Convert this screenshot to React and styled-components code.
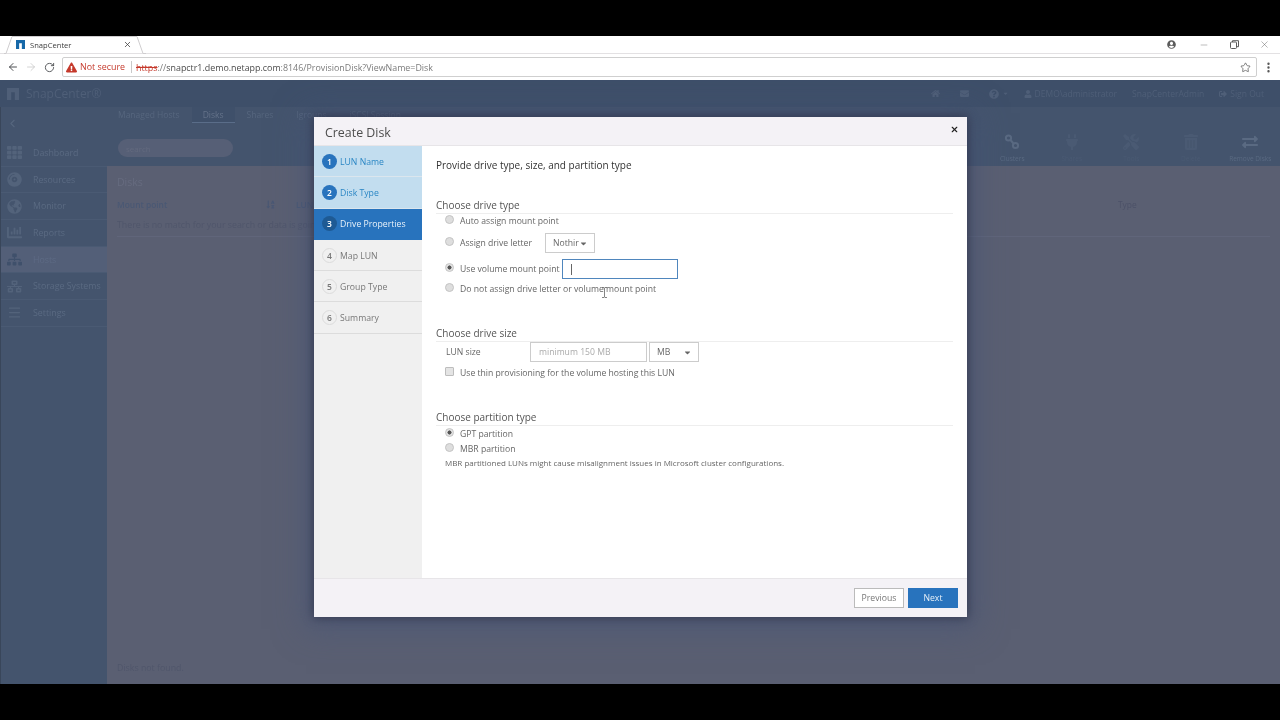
import React from 'react'
import styled, { createGlobalStyle } from 'styled-components'
import { ArrowLeft, ArrowRight, RotateCw, Star, X, Minus, ChevronLeft, EllipsisVertical, Menu } from 'lucide-react'
import {
  FaTh, FaCompactDisc, FaGlobeAmericas, FaChartBar, FaSitemap, FaNetworkWired,
  FaHome, FaEnvelope, FaQuestionCircle, FaUser, FaSignOutAlt, FaCaretDown, FaUserCircle,
  FaExchangeAlt, FaTrashAlt, FaTools, FaExclamationTriangle, FaSortAlphaDown, FaPlug,
} from 'react-icons/fa'

const GlobalStyle = createGlobalStyle`
  html, body { margin: 0; padding: 0; background: #000; }
  body { font-family: "Open Sans", "Liberation Sans", sans-serif; }
`

const Screen = styled.div`
  width: 1280px;
  height: 720px;
  display: flex;
  flex-direction: column;
  background: #000;
  overflow: hidden;
  filter: blur(0.3px);
`
const Letterbox = styled.div`
  height: ${p => p.$h}px;
  flex: none;
  background: #000;
`

/* browser chrome */
const TabStrip = styled.div`
  height: 18px;
  flex: none;
  display: flex;
  align-items: center;
  justify-content: space-between;
  background: #fff;
  border-bottom: 1px solid #e3e1e3;
  box-sizing: border-box;
  padding-right: 1px;
`
const Tab = styled.div`
  position: relative;
  width: 124px;
  height: 18px;
  margin-left: 12px;
  display: flex;
  align-items: center;
  gap: 5px;
  padding-left: 4px;
  box-sizing: border-box;
  font-size: 7.6px;
  color: #3b3b3b;
`
const TabOutline = styled.svg`
  position: absolute;
  left: -8px;
  top: 0;
`
const TabClose = styled(X)`
  margin-left: auto;
  margin-right: 4px;
`
const Favicon = styled.svg`
  flex: none;
`
const WindowButtons = styled.div`
  display: flex;
  align-items: center;
  color: #5c5c5c;
`
const WindowButton = styled.div`
  width: 30px;
  margin-right: ${p => p.$gap || 0}px;
  display: flex;
  justify-content: center;
  align-items: center;
`
const Toolbar = styled.div`
  height: 26px;
  flex: none;
  display: flex;
  align-items: center;
  background: #fff;
  color: #5f6368;
  padding-left: 4px;
  box-sizing: border-box;
`
const NavButton = styled.div`
  width: 18px;
  display: flex;
  justify-content: center;
  color: ${p => p.$off ? '#c6c6c6' : '#4f5154'};
`
const Omnibox = styled.div`
  width: 1195px;
  height: 20px;
  margin-left: 4px;
  border: 1px solid #cfcfcf;
  border-radius: 2px;
  box-sizing: border-box;
  display: flex;
  align-items: center;
  padding: 0 5px 0 3px;
  font-size: 8.9px;
  color: #4a4a4a;
  white-space: nowrap;
`
const NotSecure = styled.span`
  display: flex;
  align-items: center;
  gap: 3px;
  color: #c5392b;
  padding: 0 6px 0 0;
  margin-right: 4px;
  border-right: 1px solid #c9c9c9;
  line-height: 12px;
`
const Https = styled.span`
  color: #c5392b;
  text-decoration: line-through;
`
const Dim = styled.span`
  color: #7b7b7b;
`
const StarWrap = styled.div`
  margin-left: auto;
  display: flex;
  color: #555;
`
const MenuDots = styled.div`
  margin-left: 5px;
  display: flex;
  color: #555;
`

/* dimmed application */
const Page = styled.div`
  position: relative;
  flex: 1;
  display: flex;
  flex-direction: column;
  background: #5a5f72;
  overflow: hidden;
`
const AppHeader = styled.div`
  height: 27px;
  flex: none;
  display: flex;
  align-items: center;
  background: #3e4f69;
  padding: 0 16px 0 7px;
  box-sizing: border-box;
  color: #4f5f78;
  font-size: 8.5px;
`
const Brand = styled.div`
  display: flex;
  align-items: center;
  gap: 7px;
  font-size: 12px;
  color: #4f5f78;
`
const HeaderRight = styled.div`
  margin-left: auto;
  display: flex;
  align-items: center;
  gap: 15px;
`
const HeaderIcons = styled.div`
  display: flex;
  align-items: center;
  gap: 20px;
`
const HeaderItem = styled.span`
  display: flex;
  align-items: center;
  gap: 3px;
  white-space: nowrap;
`
const AppBody = styled.div`
  flex: 1;
  display: flex;
  min-height: 0;
`
const Sidebar = styled.div`
  width: 107px;
  flex: none;
  background: #44546d;
  border-left: 1px solid #39465a;
  box-sizing: border-box;
  color: #56667e;
  font-size: 8.8px;
`
const Collapse = styled.div`
  height: 33px;
  display: flex;
  align-items: center;
  padding-left: 5px;
`
const SideItem = styled.div`
  height: 26.7px;
  display: flex;
  align-items: center;
  gap: 11px;
  padding-left: 6px;
  box-sizing: border-box;
  background: ${p => p.$active ? '#535f78' : 'transparent'};
  color: ${p => p.$active ? '#5d6a84' : '#5a6a82'};
  border-bottom: 1px solid #4a5a73;
  white-space: nowrap;
  svg { color: ${p => p.$active ? '#3f506b' : '#53637b'}; }
`
const Content = styled.div`
  flex: 1;
  display: flex;
  flex-direction: column;
  min-width: 0;
`
const SubBar = styled.div`
  height: 59px;
  flex: none;
  display: flex;
  background: #44546d;
  color: #56667e;
  font-size: 8.5px;
`
const SubLeft = styled.div`
  width: 300px;
`
const SubTabs = styled.div`
  display: flex;
  gap: 1px;
  height: 16px;
  white-space: nowrap;
`
const SubTab = styled.span`
  height: 16px;
  padding: 0 11px;
  display: flex;
  align-items: center;
  box-sizing: border-box;
  color: ${p => p.$active ? '#647289' : '#56667e'};
  background: ${p => p.$active ? '#3f506a' : 'transparent'};
  border-bottom: 1px solid ${p => p.$active ? '#5a6d89' : 'transparent'};
`
const SearchPill = styled.div`
  width: 115px;
  height: 18px;
  margin: 16px 0 0 11px;
  border-radius: 9px;
  background: #565f76;
  color: #636a7f;
  font-size: 8px;
  display: flex;
  align-items: center;
  padding-left: 8px;
  box-sizing: border-box;
`
const Actions = styled.div`
  margin-left: auto;
  display: flex;
  padding: 27px 0 0;
`
const Action = styled.div`
  width: 59.5px;
  display: flex;
  flex-direction: column;
  align-items: center;
  gap: 4px;
  font-size: 6.5px;
  color: ${p => p.$off ? '#4a5a73' : '#5a6a82'};
  white-space: nowrap;
`
const Main = styled.div`
  flex: 1;
  padding: 9px 10px 0;
  color: #50566b;
  font-size: 8.8px;
  display: flex;
  flex-direction: column;
`
const MainTitle = styled.div`
  font-size: 10.5px;
  color: #666b7f;
`
const TableHead = styled.div`
  display: flex;
  align-items: center;
  margin-top: 9px;
  height: 13px;
`
const HeadCell = styled.span`
  width: ${p => p.$w}px;
  flex: none;
  display: flex;
  justify-content: space-between;
  align-items: center;
  padding-right: 21px;
  box-sizing: border-box;
  font-size: 8.4px;
  color: ${p => p.$plain ? '#4c5168' : '#4a5874'};
  font-weight: ${p => p.$plain ? 400 : 600};
`
const EmptyRow = styled.div`
  margin-top: 8px;
  padding-bottom: 5px;
  border-bottom: 1px solid #60657a;
  white-space: nowrap;
`
const NotFound = styled.div`
  margin-top: auto;
  padding-bottom: 10px;
`

/* dialog */
const Dialog = styled.div`
  position: absolute;
  left: 314px;
  top: 37px;
  width: 653px;
  height: 500px;
  display: flex;
  flex-direction: column;
  background: #fff;
  box-shadow: 0 0 9px 1px rgba(45, 48, 70, 0.75), 0 4px 30px 8px rgba(70, 85, 120, 0.6);
  color: #555;
`
const DialogHeader = styled.div`
  height: 29px;
  flex: none;
  display: flex;
  align-items: center;
  justify-content: space-between;
  padding: 2px 8px 0 11px;
  box-sizing: border-box;
  background: #f4f2f6;
  border-bottom: 1px solid #e7e5e8;
  font-size: 12.4px;
  color: #4d4d4d;
`
const DialogClose = styled(X)`
  color: #222;
  margin-top: -5px;
`
const DialogBody = styled.div`
  flex: 1;
  display: flex;
  min-height: 0;
`
const Wizard = styled.div`
  width: 108px;
  flex: none;
  background: #f0f0f0;
  display: flex;
  flex-direction: column;
`
const Step = styled.div`
  height: 31.3px;
  flex: none;
  display: flex;
  align-items: center;
  gap: 3px;
  padding-left: 8px;
  box-sizing: border-box;
  font-size: 8.7px;
  white-space: nowrap;
  background: ${p => p.$state === 'current' ? '#2873bd' : p.$state === 'done' ? '#c2ddef' : '#f0f0f0'};
  color: ${p => p.$state === 'current' ? '#e8f2fa' : p.$state === 'done' ? '#2a86c4' : '#777'};
  border-bottom: 1px solid ${p => p.$state === 'current' ? '#2873bd' : p.$state === 'done' ? '#dbe6ee' : '#dcdcdc'};
`
const StepNumber = styled.span`
  width: 15px;
  height: 15px;
  flex: none;
  border-radius: 50%;
  display: flex;
  align-items: center;
  justify-content: center;
  font-size: 8.5px;
  font-weight: 600;
  box-sizing: border-box;
  background: ${p => p.$state === 'current' ? '#1e5a94' : p.$state === 'done' ? '#2873bd' : 'transparent'};
  color: ${p => p.$state === 'upcoming' ? '#777' : '#fff'};
  border: ${p => p.$state === 'upcoming' ? '1px solid #dcdcdc' : 'none'};
`
const StepLabel = styled.span`
  padding-top: 1px;
`
const Pane = styled.div`
  position: relative;
  flex: 1;
  padding: 12px 14px 0;
  min-width: 0;
`
const PaneTitle = styled.div`
  font-size: 10px;
  line-height: 14px;
  color: #333;
  height: 14px;
`
const Section = styled.div`
  margin-top: ${p => p.$top}px;
`
const SectionTitle = styled.div`
  font-size: 10px;
  line-height: 14px;
  height: 15px;
  color: #555;
  border-bottom: 1px solid #eee;
`
const Rows = styled.div`
  padding-top: ${p => p.$top || 0}px;
`
const Row = styled.label`
  display: flex;
  align-items: center;
  height: ${p => p.$h || 15}px;
  padding-left: 9px;
  font-size: 8.65px;
  color: #666;
  white-space: nowrap;
`
const RadioInput = styled.input.attrs({ type: 'radio', readOnly: true })`
  appearance: none;
  width: 7px;
  height: 7px;
  margin: -3px 6px 0 0;
  flex: none;
  border-radius: 50%;
  border: 1px solid #c4c4c4;
  background: ${p => p.checked ? 'radial-gradient(circle, #555 0 1.8px, #e4e4e4 2.3px)' : '#dedede'};
  box-sizing: content-box;
`
const CheckInput = styled.input.attrs({ type: 'checkbox', readOnly: true })`
  appearance: none;
  width: 7px;
  height: 7px;
  margin: -3px 6px 0 0;
  flex: none;
  border-radius: 1px;
  border: 1px solid #bdbdbd;
  background: #e4e4e4;
  box-sizing: content-box;
`
const Select = styled.div`
  width: ${p => p.$w}px;
  height: 20px;
  margin-left: ${p => p.$left}px;
  display: flex;
  align-items: center;
  justify-content: space-between;
  padding: 0 ${p => p.$pad}px 0 7px;
  box-sizing: border-box;
  border: 1px solid #ccc;
  background: #fff;
  color: #666;
  font-size: 8.65px;
`
const MountInput = styled.div`
  width: 116px;
  height: 20px;
  margin-left: 2px;
  padding-left: 8px;
  display: flex;
  align-items: center;
  box-sizing: border-box;
  border: 1px solid #4f86bd;
  background: #fff;
`
const Caret = styled.span`
  width: 1px;
  height: 11px;
  background: #666;
`
const SizeLabel = styled.span`
  width: 85px;
  padding-left: 1px;
  box-sizing: border-box;
`
const SizeInput = styled.div`
  width: 117px;
  height: 20px;
  padding-left: 8px;
  display: flex;
  align-items: center;
  box-sizing: border-box;
  border: 1px solid #ccc;
  color: #aaa;
  font-size: 8.65px;
`
const Note = styled.div`
  padding-left: 9px;
  font-size: 8px;
  line-height: 14px;
  color: #666;
  white-space: nowrap;
`
const IBeam = styled.svg`
  position: absolute;
  left: 179px;
  top: 141px;
`
const DialogFooter = styled.div`
  height: 39px;
  flex: none;
  display: flex;
  align-items: center;
  justify-content: flex-end;
  gap: 4px;
  padding-right: 9px;
  background: #f4f2f6;
  border-top: 1px solid #e7e5e8;
  box-sizing: border-box;
`
const Button = styled.button`
  width: 50px;
  height: 20px;
  padding: 0;
  font-family: inherit;
  font-size: 8.7px;
  background: ${p => p.$primary ? '#2873bd' : '#fff'};
  color: ${p => p.$primary ? '#e6f0f8' : '#777'};
  border: 1px solid ${p => p.$primary ? '#2873bd' : '#bbb'};
`

const sideItems = [
  ['Dashboard', FaTh], ['Resources', FaCompactDisc], ['Monitor', FaGlobeAmericas], ['Reports', FaChartBar],
  ['Hosts', FaSitemap], ['Storage Systems', FaNetworkWired], ['Settings', Menu],
]
const steps = [
  ['LUN Name', 'done'], ['Disk Type', 'done'], ['Drive Properties', 'current'],
  ['Map LUN', 'upcoming'], ['Group Type', 'upcoming'], ['Summary', 'upcoming'],
]

const NetAppMark = ({ size, color }) => (
  <Favicon width={size} height={size} viewBox="0 0 10 10">
    <path d="M0 0h10v10H6.5V3.5h-3V10H0z" fill={color} />
  </Favicon>
)

const ClusterIcon = () => (
  <svg width="16" height="16" viewBox="0 0 16 16" fill="none" stroke="currentColor" strokeWidth="2">
    <circle cx="4.5" cy="4" r="2.6" />
    <circle cx="11.5" cy="11.5" r="2.6" />
    <path d="M6.5 6l3 3.5" />
  </svg>
)

const RestoreIcon = () => (
  <svg width="9" height="9" viewBox="0 0 9 9" fill="none" stroke="currentColor" strokeWidth="1">
    <rect x=".5" y="2" width="6" height="6.5" rx="1" />
    <path d="M2.5 2V.7h6v6H6.5" />
  </svg>
)

export default function App() {
  return (
    <Screen>
      <GlobalStyle />
      <Letterbox $h={36} />
      <TabStrip>
        <Tab>
          <TabOutline width="142" height="18" viewBox="0 0 142 18" fill="none">
            <path d="M0 17.5h2L8 .5h125l6 17h3" stroke="#cfcdcf" />
          </TabOutline>
          <NetAppMark size={9} color="#1668a8" />
          SnapCenter
          <TabClose size={9} strokeWidth={2} />
        </Tab>
        <WindowButtons>
          <WindowButton $gap={3}><FaUserCircle size={9} /></WindowButton>
          <WindowButton><Minus size={10} strokeWidth={1} /></WindowButton>
          <WindowButton><RestoreIcon /></WindowButton>
          <WindowButton><X size={11} strokeWidth={1} /></WindowButton>
        </WindowButtons>
      </TabStrip>
      <Toolbar>
        <NavButton><ArrowLeft size={12} strokeWidth={2} /></NavButton>
        <NavButton $off><ArrowRight size={12} strokeWidth={1.5} /></NavButton>
        <NavButton><RotateCw size={11} strokeWidth={2} /></NavButton>
        <Omnibox>
          <NotSecure>
            <FaExclamationTriangle size={11} />
            Not secure
          </NotSecure>
          <Https>https</Https>
          <Dim>://</Dim>snapctr1.demo.netapp.com<Dim>:8146/ProvisionDisk?ViewName=Disk</Dim>
          <StarWrap><Star size={11} strokeWidth={1.6} /></StarWrap>
        </Omnibox>
        <MenuDots><EllipsisVertical size={13} strokeWidth={2.4} /></MenuDots>
      </Toolbar>
      <Page>
        <AppHeader>
          <Brand>
            <NetAppMark size={12} color="#4f5f78" />
            SnapCenter®
          </Brand>
          <HeaderRight>
            <HeaderIcons>
              <HeaderItem><FaHome size={9} /></HeaderItem>
              <HeaderItem><FaEnvelope size={9} /></HeaderItem>
              <HeaderItem><FaQuestionCircle size={10} /><FaCaretDown size={7} /></HeaderItem>
            </HeaderIcons>
            <HeaderItem><FaUser size={8} />DEMO\administrator</HeaderItem>
            <HeaderItem>SnapCenterAdmin</HeaderItem>
            <HeaderItem><FaSignOutAlt size={8} />Sign Out</HeaderItem>
          </HeaderRight>
        </AppHeader>
        <AppBody>
          <Sidebar>
            <Collapse><ChevronLeft size={13} /></Collapse>
            {sideItems.map(([label, Icon]) => (
              <SideItem key={label} $active={label === 'Hosts'}>
                <Icon size={15} />
                {label}
              </SideItem>
            ))}
          </Sidebar>
          <Content>
            <SubBar>
              <SubLeft>
                <SubTabs>
                  <SubTab>Managed Hosts</SubTab>
                  <SubTab $active>Disks</SubTab>
                  <SubTab>Shares</SubTab>
                  <SubTab>Igroups</SubTab>
                  <SubTab>iSCSI Session</SubTab>
                </SubTabs>
                <SearchPill>search</SearchPill>
              </SubLeft>
              <Actions>
                <Action><ClusterIcon />Clusters</Action>
                <Action $off><FaPlug size={16} />Shares</Action>
                <Action $off><FaTools size={16} />Tools</Action>
                <Action $off><FaTrashAlt size={16} />Delete</Action>
                <Action><FaExchangeAlt size={16} />Remove Disks</Action>
              </Actions>
            </SubBar>
            <Main>
              <MainTitle>Disks</MainTitle>
              <TableHead>
                <HeadCell $w={179}>Mount point<FaSortAlphaDown size={9} /></HeadCell>
                <HeadCell $w={822}>LUN</HeadCell>
                <HeadCell $w={100} $plain>Type</HeadCell>
              </TableHead>
              <EmptyRow>There is no match for your search or data is going</EmptyRow>
              <NotFound>Disks not found.</NotFound>
            </Main>
          </Content>
        </AppBody>
        <Dialog>
          <DialogHeader>
            Create Disk
            <DialogClose size={9} strokeWidth={3} />
          </DialogHeader>
          <DialogBody>
            <Wizard>
              {steps.map(([label, state], i) => (
                <Step key={label} $state={state}>
                  <StepNumber $state={state}>{i + 1}</StepNumber>
                  <StepLabel>{label}</StepLabel>
                </Step>
              ))}
            </Wizard>
            <Pane>
              <PaneTitle>Provide drive type, size, and partition type</PaneTitle>
              <Section $top={26}>
                <SectionTitle>Choose drive type</SectionTitle>
                <Rows $top={1}>
                  <Row $h={12}><RadioInput />Auto assign mount point</Row>
                  <Row $h={32}>
                    <RadioInput />Assign drive letter
                    <Select $w={50} $left={13} $pad={6}>Nothir<FaCaretDown size={9} /></Select>
                  </Row>
                  <Row $h={20}>
                    <RadioInput checked />Use volume mount point
                    <MountInput><Caret /></MountInput>
                  </Row>
                  <Row $h={20}><RadioInput />Do not assign drive letter or volume mount point</Row>
                </Rows>
              </Section>
              <Section $top={27}>
                <SectionTitle>Choose drive size</SectionTitle>
                <Rows>
                  <Row $h={20}>
                    <SizeLabel>LUN size</SizeLabel>
                    <SizeInput>minimum 150 MB</SizeInput>
                    <Select $w={50} $left={2} $pad={6}>MB<FaCaretDown size={9} /></Select>
                  </Row>
                  <Row $h={21}><CheckInput />Use thin provisioning for the volume hosting this LUN</Row>
                </Rows>
              </Section>
              <Section $top={27}>
                <SectionTitle>Choose partition type</SectionTitle>
                <Rows>
                  <Row $h={15}><RadioInput checked />GPT partition</Row>
                  <Row $h={15}><RadioInput />MBR partition</Row>
                  <Note>MBR partitioned LUNs might cause misalignment issues in Microsoft cluster configurations.</Note>
                </Rows>
              </Section>
              <IBeam width="7" height="11" viewBox="0 0 7 11" fill="none">
                <path d="M1 .5h2l.5.5.5-.5h2M3.5 1v9M1 10.5h2l.5-.5.5.5h2" stroke="#666" strokeWidth=".8" />
              </IBeam>
            </Pane>
          </DialogBody>
          <DialogFooter>
            <Button>Previous</Button>
            <Button $primary>Next</Button>
          </DialogFooter>
        </Dialog>
      </Page>
      <Letterbox $h={36} />
    </Screen>
  )
}
